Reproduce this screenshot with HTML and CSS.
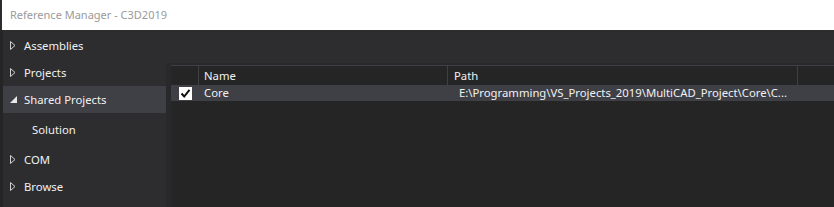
FILE: index.html
```html
<!DOCTYPE html>
<html>
<head>
<meta charset="utf-8">
<link rel="stylesheet" href="styles.css">
</head>
<body>
<div class="window">
  <div class="titlebar">Reference Manager - C3D2019</div>
  <div class="content">
    <div class="sidebar">
      <div class="item"><span class="tri"><svg width="6" height="9" viewBox="0 0 6 9"><path d="M0.5 0.5 L5 4.5 L0.5 8.5 Z" fill="none" stroke="#d0d0d0" stroke-width="1"/></svg></span>Assemblies</div>
      <div class="item"><span class="tri"><svg width="6" height="9" viewBox="0 0 6 9"><path d="M0.5 0.5 L5 4.5 L0.5 8.5 Z" fill="none" stroke="#d0d0d0" stroke-width="1"/></svg></span>Projects</div>
      <div class="item selected"><span class="tri"><svg width="7" height="7" viewBox="0 0 7 7"><path d="M7 0 L7 7 L0 7 Z" fill="#e8e8e8"/></svg></span>Shared Projects</div>
      <div class="item child">Solution</div>
      <div class="item"><span class="tri"><svg width="6" height="9" viewBox="0 0 6 9"><path d="M0.5 0.5 L5 4.5 L0.5 8.5 Z" fill="none" stroke="#d0d0d0" stroke-width="1"/></svg></span>COM</div>
      <div class="item"><span class="tri"><svg width="6" height="9" viewBox="0 0 6 9"><path d="M0.5 0.5 L5 4.5 L0.5 8.5 Z" fill="none" stroke="#d0d0d0" stroke-width="1"/></svg></span>Browse</div>
    </div>
    <div class="main">
      <div class="spacer"></div>
      <div class="table">
        <div class="hrow">
          <div class="c-check"></div>
          <div class="c-name">Name</div>
          <div class="c-path">Path</div>
          <div class="c-rest"></div>
        </div>
        <div class="row">
          <div class="c-check"><svg width="13" height="13" viewBox="0 0 13 13"><rect x="0" y="0" width="13" height="13" fill="#ffffff"/><path d="M2.5 6.5 L5.2 9.5 L10.5 2.8" fill="none" stroke="#111" stroke-width="2"/></svg></div>
          <div class="c-name">Core</div>
          <div class="c-path">E:\Programming\VS_Projects_2019\MultiCAD_Project\Core\C...</div>
          <div class="c-rest"></div>
        </div>
      </div>
    </div>
  </div>
</div>
</body>
</html>
```
FILE: styles.css
```css
html, body {
  margin: 0;
  padding: 0;
}
body {
  width: 834px;
  height: 207px;
  overflow: hidden;
  background: #252526;
  font-family: "Noto Sans", "Open Sans", sans-serif;
  font-size: 11.3px;
  color: #f1f1f1;
}
.window {
  display: flex;
  flex-direction: column;
  height: 207px;
}
.titlebar {
  height: 30px;
  box-sizing: border-box;
  background: #ffffff;
  border-left: 2px solid #2d2d30;
  color: #9a9a9a;
  font-size: 11px;
  line-height: 30px;
  padding-left: 8px;
}
.content {
  flex: 1;
  display: flex;
  border-left: 3px solid #252526;
  background: #2d2d30;
}
.sidebar {
  width: 163px;
  padding-top: 2px;
  background: #2d2d30;
}
.item {
  height: 27px;
  display: flex;
  align-items: center;
  padding-left: 7px;
}
.item.selected {
  background: #3f3f46;
}
.item.child {
  height: 33px;
  padding-left: 29px;
}
.tri {
  width: 14px;
  display: flex;
  align-items: center;
}
.main {
  flex: 1;
  display: flex;
  flex-direction: column;
  padding-left: 5px;
  background: linear-gradient(#2d2d30 0 33px, #29292c 33px);
}
.spacer {
  height: 35px;
}
.table {
  flex: 1;
  background: #252526;
}
.hrow {
  display: flex;
  height: 20px;
  box-sizing: border-box;
  border-top: 1px solid #3f3f46;
  line-height: 19px;
}
.hrow > div {
  box-sizing: border-box;
  border-right: 1px solid #3f3f46;
}
.hrow > .c-rest {
  border-right: none;
}
.c-check {
  width: 28px;
  flex: none;
}
.c-name {
  width: 249px;
  flex: none;
  padding-left: 5px;
}
.c-path {
  width: 350px;
  flex: none;
  padding-left: 6px;
  white-space: nowrap;
  overflow: hidden;
}
.c-rest {
  flex: 1;
}
.row {
  display: flex;
  height: 16px;
  line-height: 16px;
  background: #3f3f46;
}
.row .c-check {
  display: flex;
  align-items: center;
  padding-left: 8px;
  box-sizing: border-box;
}
.row .c-check svg {
  display: block;
}
```
